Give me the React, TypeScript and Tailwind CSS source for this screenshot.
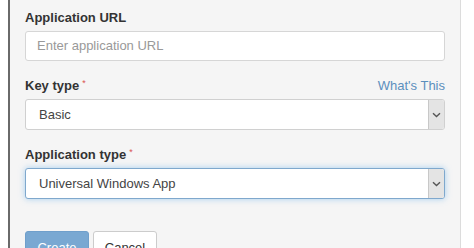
import React from "react";

function Chevron() {
  return (
    <svg width="9" height="6" viewBox="0 0 9 6" fill="none">
      <path d="M1 1.2 L4.5 4.5 L8 1.2" stroke="#555" strokeWidth="1.4" />
    </svg>
  );
}

function Label({ text, required }: { text: string; required?: boolean }) {
  return (
    <span className="text-[13px] leading-[18px] font-bold text-[#333]">
      {text}
      {required && (
        <span className="text-[#d9534f] text-[9px] align-top relative top-[-3px] ml-[3px] font-normal">*</span>
      )}
    </span>
  );
}

function Select({ value, focused }: { value: string; focused?: boolean }) {
  return (
    <div
      className={
        focused
          ? "flex h-[31px] rounded-[3px] border border-[#7fa8cd] bg-white shadow-[0_0_6px_rgba(102,175,233,0.55)]"
          : "flex h-[31px] rounded-[3px] border border-[#d0d0d0] bg-white"
      }
    >
      <div className="flex-1 flex items-center pl-[13px] text-[13px] text-[#444]">{value}</div>
      <div className="w-[16px] flex items-center justify-center bg-[#e4e4e4] border-l border-[#c8c8c8] rounded-r-[2px]">
        <Chevron />
      </div>
    </div>
  );
}

export default function App() {
  return (
    <div
      className="w-[474px] h-[248px] overflow-hidden flex bg-white"
      style={{ fontFamily: '"Liberation Sans", Arial, sans-serif' }}
    >
      <div className="w-[8px] shrink-0 bg-white" />
      <div className="w-[2px] shrink-0 bg-[#6a6a6a]" />
      <div className="w-[451px] shrink-0 bg-[#f5f5f5] border-r border-[#dcdcdc] px-[15px] pt-[9px] flex flex-col">
        <div className="shrink-0 h-[18px] flex items-center">
          <Label text="Application URL" />
        </div>
        <div className="shrink-0 mt-[4px] h-[30px] rounded-[3px] border border-[#d6d6d6] bg-white flex items-center pl-[11px] text-[13px] text-[#999]">
          Enter application URL
        </div>
        <div className="shrink-0 mt-[16px] h-[18px] flex items-center justify-between">
          <Label text="Key type" required />
          <span className="text-[13px] text-[#5b8fbd]">What's This</span>
        </div>
        <div className="shrink-0 mt-[4px]">
          <Select value="Basic" />
        </div>
        <div className="shrink-0 mt-[16px] h-[18px] flex items-center">
          <Label text="Application type" required />
        </div>
        <div className="shrink-0 mt-[4px]">
          <Select value="Universal Windows App" focused />
        </div>
        <div className="shrink-0 mt-[32px] flex gap-[4px]">
          <div className="h-[34px] w-[64px] rounded-[3px] border border-[#6f9fcb] bg-[#79a8d2] text-white text-[13px] flex items-center justify-center">
            Create
          </div>
          <div className="h-[34px] w-[64px] rounded-[3px] border border-[#ccc] bg-white text-[#333] text-[13px] flex items-center justify-center">
            Cancel
          </div>
        </div>
      </div>
      <div className="flex-1 bg-white" />
    </div>
  );
}
